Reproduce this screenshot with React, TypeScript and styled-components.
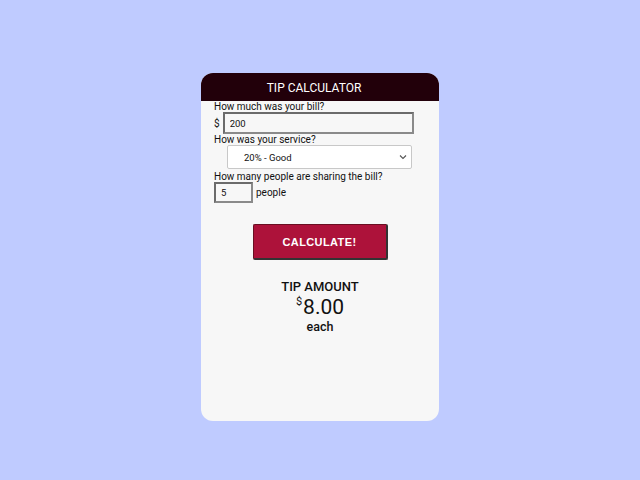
import React, { useState } from 'react'
import styled, { createGlobalStyle } from 'styled-components'

const GlobalStyle = createGlobalStyle`
    html, body {
        margin: 0;
        padding: 0;
        background: #bfcbff;
        font-family: Roboto, "Liberation Sans", sans-serif;
    }
`

const Page = styled.div`
    width: 640px;
    height: 480px;
    display: flex;
    justify-content: center;
    align-items: flex-start;
    padding-top: 73px;
    box-sizing: border-box;
`

const Card = styled.div`
    width: 238px;
    height: 348px;
    background: #f7f7f7;
    border-radius: 12px;
    overflow: hidden;
    display: flex;
    flex-direction: column;
`

const Header = styled.h1`
    margin: 0;
    height: 28px;
    background: #22000a;
    color: white;
    font-size: 12px;
    font-weight: 400;
    display: flex;
    align-items: center;
    justify-content: center;
    padding: 1px 12px 0 0;
    box-sizing: border-box;
`

const Form = styled.div`
    padding: 0 13px;
    display: flex;
    flex-direction: column;
    color: #111;
    font-size: 10px;
`

const Label = styled.label`
    display: block;
    line-height: 11px;
    margin-top: ${(p: { $top: number }) => p.$top}px;
`

const Row = styled.div`
    display: flex;
    align-items: center;
    gap: 3px;
`

const TextInput = styled.input<{ $width: number; $height: number }>`
    width: ${(p) => p.$width}px;
    height: ${(p) => p.$height}px;
    box-sizing: border-box;
    background: #f7f7f7;
    border: 2px solid #6b6b6b;
    border-right-color: #8a8a8a;
    border-bottom-color: #8a8a8a;
    padding: 0 0 0 5px;
    font-family: Roboto, sans-serif;
    font-size: 9.5px;
    color: #111;
    outline: none;
`

const SelectBox = styled.div`
    margin: 0 0 0 13px;
    width: 185px;
    height: 24px;
    box-sizing: border-box;
    background: white;
    border: 1px solid #c8c8c8;
    border-radius: 2px;
    display: flex;
    align-items: center;
    justify-content: space-between;
    padding: 0 4px 0 16px;
    font-size: 9.5px;
    color: #111;
`

const ButtonWrap = styled.div`
    display: flex;
    justify-content: center;
    margin-top: 21px;
`

const CalcButton = styled.button`
    width: 135px;
    height: 36px;
    background: #ad123a;
    color: white;
    border: 1px solid #6a0f22;
    border-right: 2px solid #333;
    border-bottom: 2px solid #333;
    border-radius: 2px;
    font-family: "Liberation Sans", Arial, sans-serif;
    font-weight: 700;
    font-size: 11px;
    letter-spacing: 0.4px;
    padding: 0;
`

const Result = styled.div`
    display: flex;
    flex-direction: column;
    align-items: center;
    margin-top: 19px;
    color: #111;
`

const ResultTitle = styled.div`
    font-size: 13px;
    font-weight: 500;
    line-height: 16px;
`

const Amount = styled.div`
    font-size: 21px;
    line-height: 23px;
    margin-top: 1px;
    sup {
        font-size: 11px;
        vertical-align: 9px;
        line-height: 0;
        margin-right: 1px;
    }
`

const Each = styled.div`
    font-size: 12.5px;
    font-weight: 500;
    line-height: 16px;
`

const App: React.FC = () => {
    const [bill, setBill] = useState('200')
    const [people, setPeople] = useState('5')

    return (
        <>
            <GlobalStyle />
            <Page>
                <Card>
                    <Header>TIP CALCULATOR</Header>
                    <Form>
                        <Label $top={0}>How much was your bill?</Label>
                        <Row>
                            <span>$</span>
                            <TextInput $width={191} $height={22} value={bill} onChange={(e) => setBill(e.target.value)} />
                        </Row>
                        <Label $top={0}>How was your service?</Label>
                        <SelectBox>
                            <span>20% - Good</span>
                            <svg width="8" height="6" viewBox="0 0 8 6">
                                <path d="M1 1.5 L4 4.5 L7 1.5" fill="none" stroke="#555" strokeWidth="1.1" />
                            </svg>
                        </SelectBox>
                        <Label $top={2}>How many people are sharing the bill?</Label>
                        <Row>
                            <TextInput $width={39} $height={21} value={people} onChange={(e) => setPeople(e.target.value)} />
                            <span>people</span>
                        </Row>
                    </Form>
                    <ButtonWrap>
                        <CalcButton>CALCULATE!</CalcButton>
                    </ButtonWrap>
                    <Result>
                        <ResultTitle>TIP AMOUNT</ResultTitle>
                        <Amount><sup>$</sup>8.00</Amount>
                        <Each>each</Each>
                    </Result>
                </Card>
            </Page>
        </>
    )
}

export default App
